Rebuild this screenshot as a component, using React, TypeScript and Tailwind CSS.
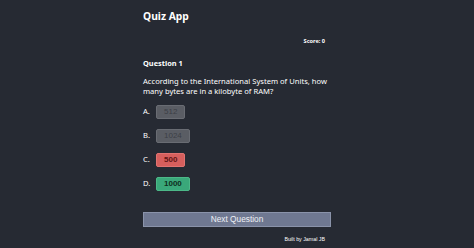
const options = [
  { key: "A", label: "512", tone: "bg-[#5a5d64] border-[#696c73] text-[#3c3f46]" },
  { key: "B", label: "1024", tone: "bg-[#5a5d64] border-[#696c73] text-[#3c3f46]" },
  { key: "C", label: "500", tone: "bg-[#d65f5d] border-[#e07371] text-[#5e1414] font-bold" },
  { key: "D", label: "1000", tone: "bg-[#3aa87a] border-[#4cb888] text-[#0f2e20] font-bold" },
];

export default function App() {
  return (
    <main className="min-h-[248px] bg-[#262a33] font-['Noto_Sans',sans-serif] text-white">
      <div className="mx-auto w-[188px] pt-[9px]">
        <h1 className="text-[10.3px] font-bold leading-[14px]">Quiz App</h1>

        <div className="mt-[14px] pr-[6px] text-right text-[5.6px] font-bold leading-[8px]">
          Score: 0
        </div>

        <h2 className="mt-[13px] text-[7.4px] font-bold leading-[10px]">
          Question 1
        </h2>

        <p className="mt-[8px] text-[7.6px] leading-[10px]">
          According to the International System of Units, how many bytes are in
          a kilobyte of RAM?
        </p>

        <ul className="mt-[9px] flex flex-col gap-[10px]">
          {options.map((o) => (
            <li key={o.key} className="flex h-[14px] items-center">
              <span className="w-[13px] text-[7.6px]">{o.key}.</span>
              <button
                className={`h-[14px] rounded-[2px] border px-[7px] text-[8px] leading-[12px] font-['Liberation_Sans',sans-serif] ${o.tone}`}
              >
                {o.label}
              </button>
            </li>
          ))}
        </ul>

        <button className="mt-[21px] h-[15px] w-full border border-[#8a93aa] bg-[#6f7891] text-[8.3px] text-[#eef0f5] font-['Liberation_Sans',sans-serif]">
          Next Question
        </button>

        <div className="mt-[7px] pr-[6px] text-right text-[5.3px] leading-[8px] font-['Liberation_Sans',sans-serif]">
          Built by Jamal JB
        </div>
      </div>
    </main>
  );
}
